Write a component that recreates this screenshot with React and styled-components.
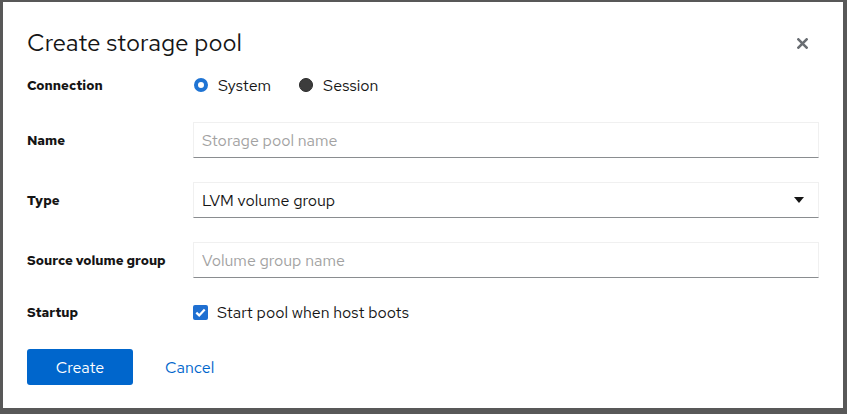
import React, { useState } from 'react'
import styled, { createGlobalStyle } from 'styled-components'

const GlobalStyle = createGlobalStyle`
  html, body {
    margin: 0;
    padding: 0;
    background: #585858;
  }
  body {
    font-family: "Red Hat Text", "Open Sans", "Noto Sans", sans-serif;
    color: #151515;
  }
`

const Backdrop = styled.div`
  width: 847px;
  height: 414px;
  box-sizing: border-box;
  padding: 2px 4px 6px 3px;
  background: #585858;
`

const Modal = styled.div`
  background: #fff;
  height: 100%;
  box-sizing: border-box;
  padding: 24px 24px 0 24px;
  display: flex;
  flex-direction: column;
`

const Header = styled.div`
  display: flex;
  justify-content: space-between;
  align-items: center;
  height: 32px;
  margin-bottom: 14px;
`

const Title = styled.h1`
  margin: 0;
  font-size: 24.3px;
  font-weight: 400;
  color: #151515;
`

const CloseButton = styled.button`
  border: 0;
  background: none;
  padding: 0;
  width: 20px;
  height: 20px;
  margin-right: 7px;
  margin-top: 3px;
  display: flex;
  align-items: center;
  justify-content: center;
  cursor: pointer;
`

const Form = styled.div`
  display: grid;
  grid-template-columns: 166px 1fr;
  grid-template-rows: 26px 36px 36px 36px 20px;
  row-gap: 24px;
  align-items: center;
`

const Label = styled.label`
  font-size: 13.3px;
  font-weight: 700;
  color: #151515;
`

const RadioGroup = styled.div`
  display: flex;
  align-items: center;
  gap: 27px;
`

const RadioItem = styled.div`
  display: flex;
  align-items: center;
  gap: 10px;
  font-size: 16px;
  color: #151515;
  cursor: pointer;
`

const RadioDot = styled.span`
  width: 14px;
  height: 14px;
  margin-left: 1px;
  border-radius: 50%;
  box-sizing: border-box;
  background: ${p => (p.$checked ? '#fff' : '#3c3c3c')};
  border: ${p => (p.$checked ? '4px solid #1f74d4' : '1px solid #2a2a2a')};
`

const TextInput = styled.input`
  width: 100%;
  height: 36px;
  box-sizing: border-box;
  border: 1px solid #f0f0f0;
  border-bottom-color: #8a8d90;
  padding: 0 8px;
  font-family: inherit;
  font-size: 16px;
  color: #151515;
  outline: none;
  &::placeholder {
    color: #a2a2a2;
  }
`

const Select = styled.div`
  height: 36px;
  box-sizing: border-box;
  border: 1px solid #f0f0f0;
  border-bottom-color: #8a8d90;
  padding: 0 16px 0 8px;
  display: flex;
  align-items: center;
  justify-content: space-between;
  font-size: 16px;
  color: #151515;
`

const Caret = styled.span`
  width: 0;
  height: 0;
  border-left: 5px solid transparent;
  border-right: 5px solid transparent;
  border-top: 6px solid #151515;
  margin-right: -2px;
`

const CheckRow = styled.div`
  display: flex;
  align-items: center;
  gap: 9px;
  font-size: 16px;
  color: #151515;
`

const CheckBox = styled.span`
  width: 15px;
  height: 15px;
  border-radius: 2px;
  background: #1f6fd1;
  display: flex;
  align-items: center;
  justify-content: center;
`

const Footer = styled.div`
  display: flex;
  align-items: center;
  gap: 8px;
  margin-top: 27px;
`

const PrimaryButton = styled.button`
  height: 36px;
  width: 106px;
  border: 0;
  border-radius: 3px;
  background: #0066cc;
  color: #fff;
  font-family: inherit;
  font-size: 16px;
  cursor: pointer;
`

const LinkButton = styled.button`
  border: 0;
  background: none;
  color: #0066cc;
  font-family: inherit;
  font-size: 16px;
  padding: 0 16px;
  margin-left: 8px;
  height: 36px;
  cursor: pointer;
`

const App = () => {
  const [connection, setConnection] = useState('system')

  return (
    <>
      <GlobalStyle />
      <Backdrop>
        <Modal>
          <Header>
            <Title>Create storage pool</Title>
            <CloseButton aria-label="Close">
              <svg width="11" height="11" viewBox="0 0 12 12">
                <path d="M1.5 1.5 L10.5 10.5 M10.5 1.5 L1.5 10.5" stroke="#6a6e73" strokeWidth="2.8" strokeLinecap="square" />
              </svg>
            </CloseButton>
          </Header>
          <Form>
            <Label>Connection</Label>
            <RadioGroup>
              <RadioItem onClick={() => setConnection('system')}>
                <RadioDot $checked={connection === 'system'} />
                System
              </RadioItem>
              <RadioItem onClick={() => setConnection('session')}>
                <RadioDot $checked={connection === 'session'} />
                Session
              </RadioItem>
            </RadioGroup>

            <Label>Name</Label>
            <TextInput placeholder="Storage pool name" />

            <Label>Type</Label>
            <Select>
              LVM volume group
              <Caret />
            </Select>

            <Label>Source volume group</Label>
            <TextInput placeholder="Volume group name" />

            <Label>Startup</Label>
            <CheckRow>
              <CheckBox>
                <svg width="11" height="9" viewBox="0 0 11 9">
                  <path d="M1.3 4.6 L4.2 7.4 L9.7 1.4" stroke="#fff" strokeWidth="2.2" fill="none" />
                </svg>
              </CheckBox>
              Start pool when host boots
            </CheckRow>
          </Form>
          <Footer>
            <PrimaryButton>Create</PrimaryButton>
            <LinkButton>Cancel</LinkButton>
          </Footer>
        </Modal>
      </Backdrop>
    </>
  )
}

export default App
